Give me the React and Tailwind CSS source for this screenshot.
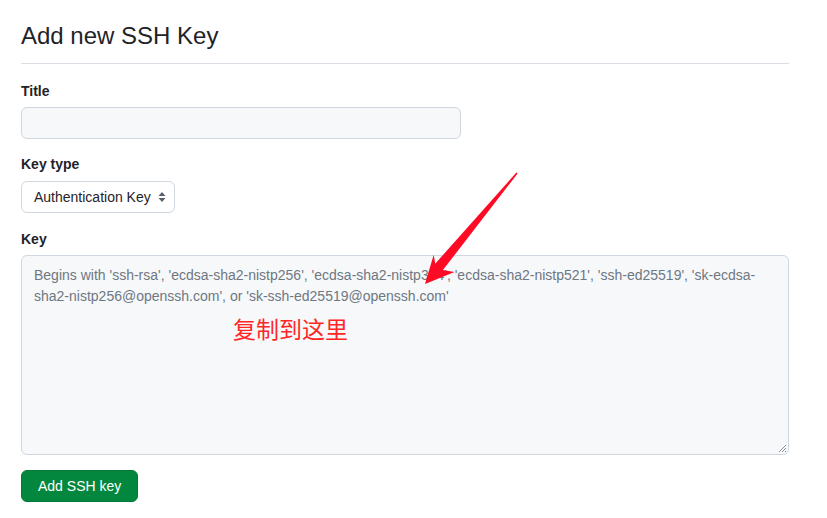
export default function App() {
  return (
    <div className="relative w-[827px] h-[518px] bg-white overflow-hidden" style={{ fontFamily: '"Liberation Sans", Arial, sans-serif' }}>
      <div className="flex flex-col pl-[21px] pr-[38px] pt-[18px]">
        <div className="border-b border-[#d8dee4] pb-[9px]">
          <h2 className="text-[24px] leading-[36px] text-[#1f2328] font-normal">Add new SSH Key</h2>
        </div>
        <label className="mt-[17px] text-[14px] leading-[21px] font-bold text-[#1f2328]">Title</label>
        <div className="mt-[5px] w-[440px] h-[32px] rounded-[6px] border border-[#d0d7de] bg-[#f6f8fa]"></div>
        <label className="mt-[15px] text-[14px] leading-[21px] font-bold text-[#1f2328]">Key type</label>
        <div className="mt-[6px] w-[154px] h-[32px] rounded-[6px] border border-[#d0d7de] bg-white flex items-center pl-[12px] pr-[8px] justify-between">
          <span className="text-[14px] text-[#1f2328]">Authentication Key</span>
          <svg width="8" height="12" viewBox="0 0 8 12">
            <path d="M4 1 L7.5 5 H0.5 Z" fill="#57606a" />
            <path d="M4 11 L7.5 7 H0.5 Z" fill="#57606a" />
          </svg>
        </div>
        <label className="mt-[16px] text-[14px] leading-[21px] font-bold text-[#1f2328]">Key</label>
        <div className="relative mt-[5px] w-[768px] h-[200px] rounded-[6px] border border-[#d0d7de] bg-[#f6f8fa] px-[12px] pt-[9px]">
          <p className="text-[14px] leading-[21px] text-[#6e7781]">
            Begins with 'ssh-rsa', 'ecdsa-sha2-nistp256', 'ecdsa-sha2-nistp384', 'ecdsa-sha2-nistp521', 'ssh-ed25519', 'sk-ecdsa-sha2-nistp256@openssh.com', or 'sk-ssh-ed25519@openssh.com'
          </p>
          <svg className="absolute right-[1px] bottom-[1px]" width="9" height="9" viewBox="0 0 9 9">
            <path d="M8 1 L1 8 M8 4 L4 8 M8 7 L7 8" stroke="#8c959f" strokeWidth="1" />
          </svg>
        </div>
        <div className="mt-[15px]">
          <button className="h-[32px] px-[16px] rounded-[6px] bg-[#03873e] text-white text-[14px] border border-[#027a37]">Add SSH key</button>
        </div>
      </div>
      <div className="absolute left-[233px] top-[312px] text-[23px] leading-[32px] text-[#ff2626]" style={{ fontFamily: '"Noto Sans CJK SC", sans-serif' }}>复制到这里</div>
      <svg className="absolute left-0 top-0 pointer-events-none" width="827" height="518" viewBox="0 0 827 518">
        <path d="M516.4 172.5 L435.2 263.7 L433.7 254.7 L425 284 L454.5 272 L442.9 270.1 L517.6 173.5 Z" fill="#ff0a24" />
      </svg>
    </div>
  );
}
